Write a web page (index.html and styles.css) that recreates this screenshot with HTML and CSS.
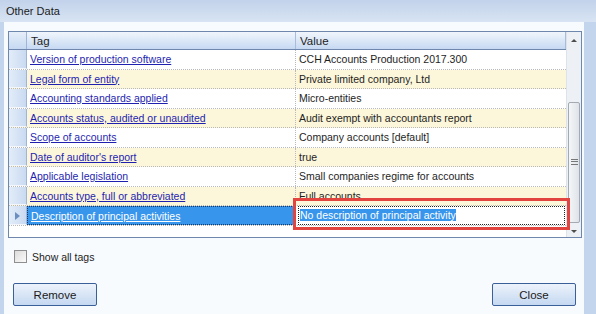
FILE: index.html
```html
<!DOCTYPE html>
<html lang="en">
<head>
  <meta charset="UTF-8" />
  <title>Other Data</title>
  <link rel="stylesheet" href="styles.css">
</head>
<body>

  <div class="window">
    <div class="title-bar">Other Data</div>

    <div class="panel">
      <div class="grid">
        <div class="grid-body">
          <div class="row head">
            <div class="rh"></div>
            <div class="cell">Tag</div>
            <div class="cell">Value</div>
          </div>
          <div class="row">
            <div class="rh"></div>
            <div class="cell"><a>Version of production software</a></div>
            <div class="cell">CCH Accounts Production 2017.300</div>
          </div>
          <div class="row alt">
            <div class="rh"></div>
            <div class="cell"><a>Legal form of entity</a></div>
            <div class="cell">Private limited company, Ltd</div>
          </div>
          <div class="row">
            <div class="rh"></div>
            <div class="cell"><a>Accounting standards applied</a></div>
            <div class="cell">Micro-entities</div>
          </div>
          <div class="row alt">
            <div class="rh"></div>
            <div class="cell"><a>Accounts status, audited or unaudited</a></div>
            <div class="cell">Audit exempt with accountants report</div>
          </div>
          <div class="row">
            <div class="rh"></div>
            <div class="cell"><a>Scope of accounts</a></div>
            <div class="cell">Company accounts [default]</div>
          </div>
          <div class="row alt">
            <div class="rh"></div>
            <div class="cell"><a>Date of auditor's report</a></div>
            <div class="cell">true</div>
          </div>
          <div class="row">
            <div class="rh"></div>
            <div class="cell"><a>Applicable legislation</a></div>
            <div class="cell">Small companies regime for accounts</div>
          </div>
          <div class="row alt">
            <div class="rh"></div>
            <div class="cell"><a>Accounts type, full or abbreviated</a></div>
            <div class="cell">Full accounts</div>
          </div>
          <div class="row selected">
            <div class="rh"><span class="marker"></span></div>
            <div class="cell"><a>Description of principal activities</a></div>
            <div class="cell edit"><span class="edit-box"><span class="sel">No description of principal activity</span></span></div>
          </div>
        </div>

        <div class="scrollbar">
          <div class="arrow up"></div>
          <div class="track">
            <div class="thumb"><span class="grip"></span></div>
          </div>
          <div class="arrow down"></div>
        </div>

        <!-- highlight box drawn over the edited value -->
        <div class="callout"></div>
      </div>

      <label class="check">
        <span class="box"></span>
        Show all tags
      </label>

      <div class="buttons">
        <button class="btn">Remove</button>
        <button class="btn">Close</button>
      </div>
    </div>
  </div>

</body>
</html>
```

FILE: styles.css
```css
* { margin: 0; padding: 0; box-sizing: border-box; }
body {
  font-family: "Liberation Sans", Arial, sans-serif;
  font-size: 10.5px;
  color: #1e1e1e;
  background: #c3d5ed;
  width: 596px;
  height: 314px;
  overflow: hidden;
}

.window {
  display: flex;
  flex-direction: column;
  height: 314px;
}

.title-bar {
  height: 22px;
  padding: 5px 6px 0;
  font-size: 11px;
  color: #1b1b1b;
  background: linear-gradient(#c2d2ea, #d8e4f3);
}

.panel {
  flex: 1;
  margin: 0 12px 0 4px;
  background: #f8fbfe;
  padding: 9px 2px 0 4px;
  display: flex;
  flex-direction: column;
}

/* --- Data grid --- */
.grid {
  position: relative;
  display: flex;
  height: 207px;
  border: 1px solid #6f86ad;
  background: #fff;
}

.grid-body {
  flex: 1;
}

.row {
  display: grid;
  grid-template-columns: 18px 269px 1fr;
  height: 19.5px;
  border-bottom: 1px dotted #b9b9b9;
}

.row.alt { background: #fcf6da; }

.row .cell {
  padding: 0 3px;
  line-height: 18px;
  white-space: nowrap;
  overflow: hidden;
  border-right: 1px dotted #b9b9b9;
}

.row .cell:last-child { border-right: none; }

.rh {
  background: linear-gradient(90deg, #e3edf9, #c9daf1);
  border-right: 1px solid #9fb5d6;
  border-bottom: 1px solid #f3f7fc;
  position: relative;
}

.row.head {
  height: 18px;
  border-bottom: 1px solid #6f86ad;
  background: linear-gradient(#f1f6fc, #c6d9f2);
}

.row.head .cell {
  font-size: 11.5px;
  line-height: 18px;
  border-right: 1px solid #a9bddb;
  padding-left: 4px;
}

.row.head .rh {
  background: linear-gradient(#e6eef9, #c6d9f2);
  border-bottom: none;
}

a {
  color: #1f1fb0;
  text-decoration: underline;
}

.row.selected .cell:nth-child(2) {
  background: #3795ec;
  border: 1px dotted #1b3b66;
}

.row.selected a { color: #fff; }

.marker {
  position: absolute;
  left: 6px;
  top: 6px;
  border-left: 5px solid #6c8fbf;
  border-top: 4px solid transparent;
  border-bottom: 4px solid transparent;
}

.cell.edit {
  padding: 0 1px 0 2px;
  background: #fff;
}

.edit-box {
  display: block;
  height: 19px;
  border: 1px dotted #222;
  padding-left: 1px;
  line-height: 17px;
}

.sel {
  background: #3795ec;
  color: #fff;
}

/* --- Scrollbar --- */
.scrollbar {
  width: 15px;
  display: flex;
  flex-direction: column;
  background: #edf0f4;
  border-left: 1px solid #dde3ea;
}

.arrow {
  height: 17px;
  position: relative;
}

.arrow::after {
  content: "";
  position: absolute;
  left: 4px;
  border-left: 3px solid transparent;
  border-right: 3px solid transparent;
}

.arrow.up::after { top: 7px; border-bottom: 3px solid #4d4d4d; }
.arrow.down::after { top: 7px; border-top: 3px solid #4d4d4d; }

.track {
  flex: 1;
  padding-top: 55px;
}

.thumb {
  height: 121px;
  margin: 0 1px;
  border: 1px solid #a3aab4;
  border-radius: 2px;
  background: linear-gradient(90deg, #f4f6f8, #dfe3e8);
  display: flex;
  align-items: center;
  justify-content: center;
}

.grip {
  width: 7px;
  height: 6px;
  border-top: 1px solid #777;
  border-bottom: 1px solid #777;
  position: relative;
}

.grip::after {
  content: "";
  position: absolute;
  left: 0;
  right: 0;
  top: 1px;
  border-top: 1px solid #777;
}

.callout {
  position: absolute;
  left: 284px;
  top: 166px;
  width: 277px;
  height: 32px;
  border: 3px solid #e2443f;
}

/* --- Bottom controls --- */
.check {
  display: flex;
  align-items: center;
  gap: 5px;
  margin: 11px 0 0 6px;
  height: 15px;
  color: #222;
}

.box {
  width: 13px;
  height: 13px;
  border: 1px solid #8f8f8f;
  background: linear-gradient(135deg, #dcdcdc, #fafafa);
}

.buttons {
  display: flex;
  justify-content: space-between;
  margin: 19px 6px 0 5px;
}

.btn {
  width: 84px;
  height: 23px;
  font-family: "Liberation Sans", Arial, sans-serif;
  font-size: 11.5px;
  color: #1b1b1b;
  border: 1px solid #3b5f98;
  border-radius: 2px;
  background: linear-gradient(#edf3fb, #c4d8f1);
}
```
